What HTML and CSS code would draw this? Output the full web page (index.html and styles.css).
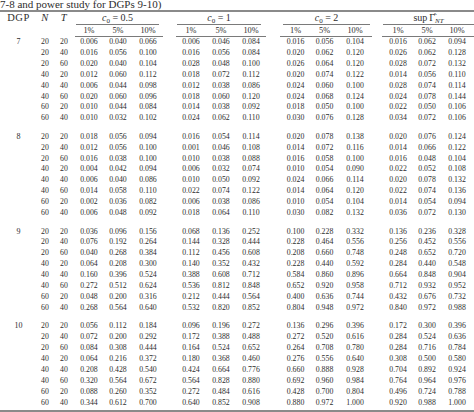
FILE: index.html
```html
<!DOCTYPE html>
<html lang="en">
<head>
<meta charset="utf-8">
<title>Size and power study</title>
<link rel="stylesheet" href="styles.css">
</head>
<body>
<div class="title">7-8 and power study for DGPs 9-10)</div>
<table class="res">
<colgroup>
<col style="width:37px"><col style="width:16px"><col style="width:22px">
<col style="width:28px"><col style="width:30px"><col style="width:30px"><col style="width:13px">
<col style="width:30px"><col style="width:30px"><col style="width:30px"><col style="width:14px">
<col style="width:31px"><col style="width:27px"><col style="width:34px"><col style="width:10px">
<col style="width:32px"><col style="width:26px"><col style="width:34px">
</colgroup>
<thead>
<tr class="h1">
<th class="lab">DGP</th><th class="lab"><i>N</i></th><th class="lab"><i>T</i></th>
<th colspan="3"><div class="cm cm-a"><i>c</i><sub>0</sub> = 0.5</div></th><th></th>
<th colspan="3"><div class="cm cm-b"><i>c</i><sub>0</sub> = 1</div></th><th></th>
<th colspan="3"><div class="cm cm-c"><i>c</i><sub>0</sub> = 2</div></th><th></th>
<th colspan="3"><div class="cm cm-d">sup&#8201;Γ&#770;<sub><i>NT</i></sub></div></th>
</tr>
<tr class="h2">
<th></th><th></th><th></th>
<th class="p">1%</th><th class="p">5%</th><th class="p">10%</th><th></th>
<th class="p">1%</th><th class="p">5%</th><th class="p">10%</th><th></th>
<th class="p">1%</th><th class="p">5%</th><th class="p">10%</th><th></th>
<th class="p">1%</th><th class="p">5%</th><th class="p">10%</th>
</tr>
</thead>
<tbody>
<tr><td class="d">7</td><td>20</td><td>20</td><td>0.006</td><td>0.040</td><td>0.066</td><td></td><td>0.006</td><td>0.046</td><td>0.084</td><td></td><td>0.016</td><td>0.056</td><td>0.104</td><td></td><td>0.016</td><td>0.062</td><td>0.094</td></tr>
<tr><td></td><td>20</td><td>40</td><td>0.016</td><td>0.056</td><td>0.100</td><td></td><td>0.016</td><td>0.056</td><td>0.084</td><td></td><td>0.020</td><td>0.062</td><td>0.120</td><td></td><td>0.026</td><td>0.062</td><td>0.128</td></tr>
<tr><td></td><td>20</td><td>60</td><td>0.020</td><td>0.040</td><td>0.104</td><td></td><td>0.028</td><td>0.048</td><td>0.100</td><td></td><td>0.026</td><td>0.064</td><td>0.120</td><td></td><td>0.028</td><td>0.072</td><td>0.132</td></tr>
<tr><td></td><td>40</td><td>20</td><td>0.012</td><td>0.060</td><td>0.112</td><td></td><td>0.018</td><td>0.072</td><td>0.112</td><td></td><td>0.020</td><td>0.074</td><td>0.122</td><td></td><td>0.014</td><td>0.056</td><td>0.110</td></tr>
<tr><td></td><td>40</td><td>40</td><td>0.006</td><td>0.044</td><td>0.098</td><td></td><td>0.012</td><td>0.038</td><td>0.086</td><td></td><td>0.024</td><td>0.060</td><td>0.100</td><td></td><td>0.028</td><td>0.074</td><td>0.114</td></tr>
<tr><td></td><td>40</td><td>60</td><td>0.020</td><td>0.060</td><td>0.096</td><td></td><td>0.018</td><td>0.060</td><td>0.120</td><td></td><td>0.024</td><td>0.068</td><td>0.124</td><td></td><td>0.024</td><td>0.078</td><td>0.144</td></tr>
<tr><td></td><td>60</td><td>20</td><td>0.010</td><td>0.044</td><td>0.084</td><td></td><td>0.014</td><td>0.038</td><td>0.092</td><td></td><td>0.018</td><td>0.050</td><td>0.100</td><td></td><td>0.022</td><td>0.050</td><td>0.106</td></tr>
<tr><td></td><td>60</td><td>40</td><td>0.010</td><td>0.032</td><td>0.102</td><td></td><td>0.024</td><td>0.062</td><td>0.110</td><td></td><td>0.030</td><td>0.076</td><td>0.128</td><td></td><td>0.034</td><td>0.072</td><td>0.106</td></tr>
</tbody>
<tbody>
<tr><td class="d">8</td><td>20</td><td>20</td><td>0.018</td><td>0.056</td><td>0.094</td><td></td><td>0.016</td><td>0.054</td><td>0.114</td><td></td><td>0.020</td><td>0.078</td><td>0.138</td><td></td><td>0.020</td><td>0.076</td><td>0.124</td></tr>
<tr><td></td><td>20</td><td>40</td><td>0.012</td><td>0.056</td><td>0.100</td><td></td><td>0.001</td><td>0.046</td><td>0.108</td><td></td><td>0.014</td><td>0.072</td><td>0.116</td><td></td><td>0.014</td><td>0.066</td><td>0.122</td></tr>
<tr><td></td><td>20</td><td>60</td><td>0.016</td><td>0.038</td><td>0.100</td><td></td><td>0.010</td><td>0.038</td><td>0.088</td><td></td><td>0.016</td><td>0.058</td><td>0.100</td><td></td><td>0.016</td><td>0.048</td><td>0.104</td></tr>
<tr><td></td><td>40</td><td>20</td><td>0.004</td><td>0.042</td><td>0.094</td><td></td><td>0.006</td><td>0.032</td><td>0.074</td><td></td><td>0.010</td><td>0.054</td><td>0.090</td><td></td><td>0.022</td><td>0.052</td><td>0.108</td></tr>
<tr><td></td><td>40</td><td>40</td><td>0.006</td><td>0.040</td><td>0.086</td><td></td><td>0.010</td><td>0.050</td><td>0.092</td><td></td><td>0.024</td><td>0.066</td><td>0.114</td><td></td><td>0.020</td><td>0.078</td><td>0.132</td></tr>
<tr><td></td><td>40</td><td>60</td><td>0.014</td><td>0.058</td><td>0.110</td><td></td><td>0.022</td><td>0.074</td><td>0.122</td><td></td><td>0.014</td><td>0.064</td><td>0.120</td><td></td><td>0.022</td><td>0.074</td><td>0.136</td></tr>
<tr><td></td><td>60</td><td>20</td><td>0.002</td><td>0.036</td><td>0.082</td><td></td><td>0.006</td><td>0.038</td><td>0.086</td><td></td><td>0.010</td><td>0.054</td><td>0.104</td><td></td><td>0.014</td><td>0.054</td><td>0.094</td></tr>
<tr><td></td><td>60</td><td>40</td><td>0.006</td><td>0.048</td><td>0.092</td><td></td><td>0.018</td><td>0.064</td><td>0.110</td><td></td><td>0.030</td><td>0.082</td><td>0.132</td><td></td><td>0.036</td><td>0.072</td><td>0.130</td></tr>
</tbody>
<tbody>
<tr><td class="d">9</td><td>20</td><td>20</td><td>0.036</td><td>0.096</td><td>0.156</td><td></td><td>0.068</td><td>0.136</td><td>0.252</td><td></td><td>0.100</td><td>0.228</td><td>0.332</td><td></td><td>0.136</td><td>0.236</td><td>0.328</td></tr>
<tr><td></td><td>20</td><td>40</td><td>0.076</td><td>0.192</td><td>0.264</td><td></td><td>0.144</td><td>0.328</td><td>0.444</td><td></td><td>0.228</td><td>0.464</td><td>0.556</td><td></td><td>0.256</td><td>0.452</td><td>0.556</td></tr>
<tr><td></td><td>20</td><td>60</td><td>0.040</td><td>0.268</td><td>0.384</td><td></td><td>0.112</td><td>0.456</td><td>0.608</td><td></td><td>0.208</td><td>0.660</td><td>0.748</td><td></td><td>0.248</td><td>0.652</td><td>0.720</td></tr>
<tr><td></td><td>40</td><td>20</td><td>0.064</td><td>0.208</td><td>0.300</td><td></td><td>0.140</td><td>0.352</td><td>0.432</td><td></td><td>0.228</td><td>0.440</td><td>0.592</td><td></td><td>0.284</td><td>0.440</td><td>0.548</td></tr>
<tr><td></td><td>40</td><td>40</td><td>0.160</td><td>0.396</td><td>0.524</td><td></td><td>0.388</td><td>0.608</td><td>0.712</td><td></td><td>0.584</td><td>0.860</td><td>0.896</td><td></td><td>0.664</td><td>0.848</td><td>0.904</td></tr>
<tr><td></td><td>40</td><td>60</td><td>0.272</td><td>0.512</td><td>0.624</td><td></td><td>0.536</td><td>0.812</td><td>0.848</td><td></td><td>0.652</td><td>0.920</td><td>0.958</td><td></td><td>0.712</td><td>0.932</td><td>0.952</td></tr>
<tr><td></td><td>60</td><td>20</td><td>0.048</td><td>0.200</td><td>0.316</td><td></td><td>0.212</td><td>0.444</td><td>0.564</td><td></td><td>0.400</td><td>0.636</td><td>0.744</td><td></td><td>0.432</td><td>0.676</td><td>0.732</td></tr>
<tr><td></td><td>60</td><td>40</td><td>0.268</td><td>0.564</td><td>0.640</td><td></td><td>0.532</td><td>0.820</td><td>0.852</td><td></td><td>0.804</td><td>0.948</td><td>0.972</td><td></td><td>0.840</td><td>0.972</td><td>0.988</td></tr>
</tbody>
<tbody>
<tr><td class="d">10</td><td>20</td><td>20</td><td>0.056</td><td>0.112</td><td>0.184</td><td></td><td>0.096</td><td>0.196</td><td>0.272</td><td></td><td>0.136</td><td>0.296</td><td>0.396</td><td></td><td>0.172</td><td>0.300</td><td>0.396</td></tr>
<tr><td></td><td>20</td><td>40</td><td>0.072</td><td>0.200</td><td>0.292</td><td></td><td>0.172</td><td>0.388</td><td>0.488</td><td></td><td>0.272</td><td>0.520</td><td>0.616</td><td></td><td>0.284</td><td>0.524</td><td>0.636</td></tr>
<tr><td></td><td>20</td><td>60</td><td>0.084</td><td>0.308</td><td>0.444</td><td></td><td>0.164</td><td>0.524</td><td>0.652</td><td></td><td>0.264</td><td>0.708</td><td>0.780</td><td></td><td>0.284</td><td>0.716</td><td>0.784</td></tr>
<tr><td></td><td>40</td><td>20</td><td>0.064</td><td>0.216</td><td>0.372</td><td></td><td>0.180</td><td>0.368</td><td>0.460</td><td></td><td>0.276</td><td>0.556</td><td>0.640</td><td></td><td>0.308</td><td>0.500</td><td>0.580</td></tr>
<tr><td></td><td>40</td><td>40</td><td>0.208</td><td>0.428</td><td>0.540</td><td></td><td>0.424</td><td>0.664</td><td>0.776</td><td></td><td>0.660</td><td>0.888</td><td>0.928</td><td></td><td>0.704</td><td>0.892</td><td>0.924</td></tr>
<tr><td></td><td>40</td><td>60</td><td>0.320</td><td>0.564</td><td>0.672</td><td></td><td>0.564</td><td>0.828</td><td>0.880</td><td></td><td>0.692</td><td>0.960</td><td>0.984</td><td></td><td>0.764</td><td>0.964</td><td>0.976</td></tr>
<tr><td></td><td>60</td><td>20</td><td>0.088</td><td>0.260</td><td>0.352</td><td></td><td>0.272</td><td>0.484</td><td>0.616</td><td></td><td>0.428</td><td>0.700</td><td>0.804</td><td></td><td>0.496</td><td>0.724</td><td>0.788</td></tr>
<tr><td></td><td>60</td><td>40</td><td>0.344</td><td>0.612</td><td>0.700</td><td></td><td>0.640</td><td>0.852</td><td>0.908</td><td></td><td>0.880</td><td>0.972</td><td>1.000</td><td></td><td>0.920</td><td>0.988</td><td>1.000</td></tr>
</tbody>
</table>
</body>
</html>
```

FILE: styles.css
```css
html, body {
  margin: 0;
  padding: 0;
  background: #ffffff;
}

body {
  width: 474px;
  height: 412px;
  overflow: hidden;
  color: #2e2e2e;
  font-family: "Liberation Serif", "Times New Roman", serif;
}

.title {
  font-size: 11px;
  line-height: 9px;
  height: 9px;
  margin: 0 0 1px 0;
  white-space: nowrap;
}

.res {
  width: 474px;
  table-layout: fixed;
  border-collapse: separate;
  border-spacing: 0;
  border-top: 2px solid #8a8a8a;
  border-bottom: 2px solid #8a8a8a;
}

.res th,
.res td {
  padding: 0;
  text-align: center;
  font-weight: normal;
  white-space: nowrap;
}

.h1 th {
  height: 13px;
  vertical-align: top;
}

.h1 .lab {
  font-size: 10.5px;
  line-height: 12px;
  letter-spacing: 0.5px;
}

.cm {
  height: 12px;
  line-height: 12px;
  font-size: 10px;
  border-bottom: 1px solid #7a7a7a;
}

.cm-a { margin: 0 4px 0 1px; }
.cm-b { margin: 0 5px 0 1px; }
.cm-c { margin: 0 2px 0 3px; }
.cm-d { margin: 0 0 0 1px; }

.cm sub {
  font-size: 0.7em;
  line-height: 0;
  vertical-align: -0.3em;
}

.h2 th {
  height: 11px;
  line-height: 11px;
  font-size: 8.3px;
}

.h2 .p {
  border-bottom: 1px solid #7a7a7a;
}

.res td {
  font-size: 7.8px;
  line-height: 10.9px;
  height: 10.9px;
}

.res tbody + tbody tr:first-child td {
  padding-top: 7.5px;
}

.res td.d {
  font-size: 8px;
}

.res tbody:last-child tr:last-child td {
  padding-bottom: 1px;
}
```
